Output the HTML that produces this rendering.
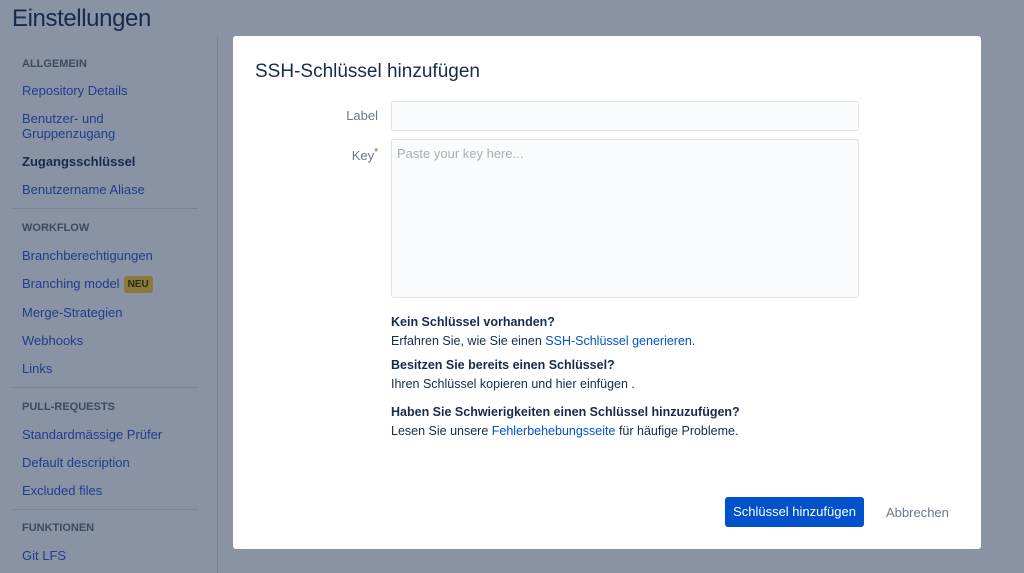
<!DOCTYPE html>
<html><head><meta charset="utf-8"><style>
*{box-sizing:border-box;margin:0;padding:0}
body{width:1024px;height:573px;overflow:hidden;background:#8993a4;font-family:"Liberation Sans",sans-serif;font-size:13px;position:relative}
h1{position:absolute;left:12px;top:5px;font-size:24px;font-weight:normal;color:#172b4d;letter-spacing:-0.4px}
.vline{position:absolute;left:217px;top:36px;width:1px;height:537px;background:#7a8497}
.hd{position:absolute;left:22px;font-size:11px;font-weight:bold;color:#3d4a60}
.lk{position:absolute;left:22px;color:#1f3d8f;font-size:13px;line-height:15px}
.sep{position:absolute;left:12px;width:186px;height:1px;background:#7a8497}
.neu{display:inline-block;background:#8b7a3a;color:#2b2a1e;font-size:10px;font-weight:bold;padding:1px 4px;border-radius:3px;margin-left:4px;vertical-align:1px}
.modal{position:absolute;left:233px;top:36px;width:748px;height:513px;background:#fff;border-radius:3px}
.title{position:absolute;left:22px;top:25px;font-size:19px;color:#172b4d}
.lbl{position:absolute;right:603px;font-size:13px;color:#6b778c;text-align:right}
.inp{position:absolute;left:158px;width:468px;background:#fafbfc;border:1px solid #dfe1e6;border-radius:3px}
.ph{position:absolute;left:164px;top:110px;color:#a5adba;font-size:13px}
.help{position:absolute;left:158px;font-size:12.5px;color:#172b4d;line-height:19px}
.help b{display:block}
.help a{color:#0052cc;text-decoration:none}
.btn{position:absolute;left:492px;top:461px;width:139px;height:30px;background:#0052cc;color:#fff;border-radius:3px;font-size:13px;text-align:center;line-height:30px}
.cancel{position:absolute;left:653px;top:469px;color:#6b778c;font-size:13px}
</style></head><body>
<h1>Einstellungen</h1>
<div class="vline"></div>
<div class="hd" style="top:58px">ALLGEMEIN</div>
<div class="lk" style="top:83px">Repository Details</div>
<div class="lk" style="top:111px">Benutzer- und<br>Gruppenzugang</div>
<div class="lk" style="top:154px;font-weight:bold;color:#172b4d">Zugangsschlüssel</div>
<div class="lk" style="top:182px">Benutzername Aliase</div>
<div class="sep" style="top:208px"></div>
<div class="hd" style="top:222px">WORKFLOW</div>
<div class="lk" style="top:248px">Branchberechtigungen</div>
<div class="lk" style="top:276px">Branching model<span class="neu">NEU</span></div>
<div class="lk" style="top:305px">Merge-Strategien</div>
<div class="lk" style="top:333px">Webhooks</div>
<div class="lk" style="top:361px">Links</div>
<div class="sep" style="top:387px"></div>
<div class="hd" style="top:401px">PULL-REQUESTS</div>
<div class="lk" style="top:427px">Standardmässige Prüfer</div>
<div class="lk" style="top:455px">Default description</div>
<div class="lk" style="top:483px">Excluded files</div>
<div class="sep" style="top:509px"></div>
<div class="hd" style="top:522px">FUNKTIONEN</div>
<div class="lk" style="top:548px">Git LFS</div>

<div class="modal">
<div class="title">SSH-Schlüssel hinzufügen</div>
<div class="lbl" style="top:72px">Label</div>
<div class="inp" style="top:65px;height:30px"></div>
<div class="lbl" style="top:111px">Key<span style="color:#de350b;font-size:10px;vertical-align:5px">*</span></div>
<div class="inp" style="top:103px;height:159px"></div>
<div class="ph">Paste your key here...</div>
<div class="help" style="top:277px"><b>Kein Schlüssel vorhanden?</b>Erfahren Sie, wie Sie einen <a>SSH-Schlüssel generieren</a>.</div>
<div class="help" style="top:320px"><b>Besitzen Sie bereits einen Schlüssel?</b>Ihren Schlüssel kopieren und hier einfügen .</div>
<div class="help" style="top:367px"><b>Haben Sie Schwierigkeiten einen Schlüssel hinzuzufügen?</b>Lesen Sie unsere <a>Fehlerbehebungsseite</a> für häufige Probleme.</div>
<div class="btn">Schlüssel hinzufügen</div>
<div class="cancel">Abbrechen</div>
</div>
</body></html>
